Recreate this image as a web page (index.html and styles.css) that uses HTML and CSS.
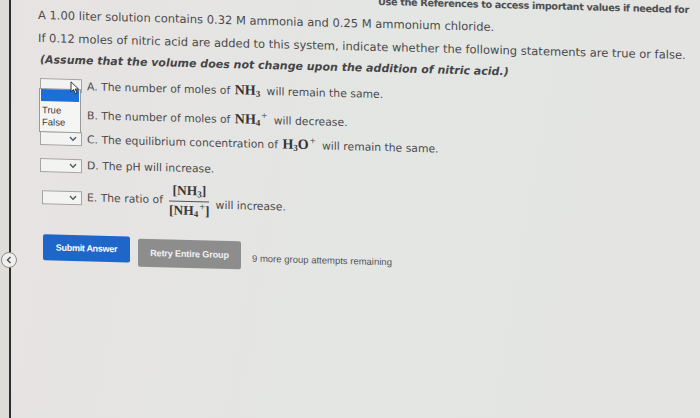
FILE: index.html
```html
<!DOCTYPE html>
<html>
<head>
<meta charset="utf-8">
<link rel="stylesheet" href="styles.css">
</head>
<body>
<div class="screen">
  <div class="sidebar">
    <div class="back-btn">
      <svg width="10" height="10" viewBox="0 0 10 10"><path d="M6.5 2 L3.5 5 L6.5 8" fill="none" stroke="#555" stroke-width="1.5"/></svg>
    </div>
  </div>
  <div class="main">
    <div class="content">
      <div class="refs">Use the References to access important values if needed for</div>
      <p class="line l1">A 1.00 liter solution contains 0.32 M ammonia and 0.25 M ammonium chloride.</p>
      <p class="line">If 0.12 moles of nitric acid are added to this system, indicate whether the following statements are true or false.</p>
      <p class="line note">(Assume that the volume does not change upon the addition of nitric acid.)</p>

      <div class="row row-a">
        <div class="select open">
          <div class="menu">
            <div class="opt sel"></div>
            <div class="opt">True</div>
            <div class="opt">False</div>
          </div>
          <svg class="cursor" width="10" height="14" viewBox="0 0 10 14"><path d="M1 1 L1 11 L3.5 8.6 L5.4 12.8 L7 12 L5.2 8 L8.6 8 Z" fill="#fff" stroke="#222" stroke-width="0.9"/></svg>
        </div>
        <span class="stmt">A. The number of moles of <span class="chem">NH<sub>3</sub></span> will remain the same.</span>
      </div>

      <div class="row row-b">
        <div class="select hidden-sel"></div>
        <span class="stmt">B. The number of moles of <span class="chem">NH<sub>4</sub><sup>+</sup></span> will decrease.</span>
      </div>

      <div class="row row-c">
        <div class="select"><svg class="chev" width="8" height="6" viewBox="0 0 8 6"><path d="M1 1.2 L4 4.4 L7 1.2" fill="none" stroke="#4a5a70" stroke-width="1.4"/></svg></div>
        <span class="stmt">C. The equilibrium concentration of <span class="chem">H<sub>3</sub>O<sup>+</sup></span> will remain the same.</span>
      </div>

      <div class="row row-d">
        <div class="select"><svg class="chev" width="8" height="6" viewBox="0 0 8 6"><path d="M1 1.2 L4 4.4 L7 1.2" fill="none" stroke="#4a5a70" stroke-width="1.4"/></svg></div>
        <span class="stmt">D. The pH will increase.</span>
      </div>

      <div class="row row-e">
        <div class="select sel-e"><svg class="chev" width="8" height="6" viewBox="0 0 8 6"><path d="M1 1.2 L4 4.4 L7 1.2" fill="none" stroke="#4a5a70" stroke-width="1.4"/></svg></div>
        <span class="stmt">E. The ratio of</span>
        <span class="frac">
          <span class="num">[NH<sub>3</sub>]</span>
          <span class="den">[NH<sub>4</sub><sup>+</sup>]</span>
        </span>
        <span class="stmt after">will increase.</span>
      </div>

      <div class="actions">
        <button class="btn submit">Submit Answer</button>
        <button class="btn retry">Retry Entire Group</button>
        <span class="attempts">9 more group attempts remaining</span>
      </div>
    </div>
  </div>
</div>
</body>
</html>
```

FILE: styles.css
```css
html, body {
  margin: 0;
  padding: 0;
  width: 700px;
  height: 418px;
  overflow: hidden;
}
body {
  background: linear-gradient(100deg, #e7e3e2 0%, #e3e6e3 55%, #e4e4e2 100%);
  font-family: "DejaVu Sans", Verdana, sans-serif;
  color: #4b4b4d;
}
.screen {
  display: flex;
  height: 418px;
}
.sidebar {
  position: relative;
  width: 9px;
  flex: none;
  border-right: 2px solid #2e2e2e;
  background: #deddda;
}
.back-btn {
  position: absolute;
  left: 1px;
  top: 252px;
  width: 14px;
  height: 14px;
  border-radius: 50%;
  background: #efefed;
  border: 1px solid #8a8a8a;
  display: flex;
  align-items: center;
  justify-content: center;
}
.main {
  flex: 1;
  padding-left: 26px;
}
.content {
  transform: skewY(1.5deg);
  transform-origin: 0 0;
}
.refs {
  margin: -14px 0 0 341px;
  height: 14px;
  line-height: 14px;
  font-size: 9.8px;
  letter-spacing: -0.4px;
  font-weight: bold;
  color: #505052;
  white-space: nowrap;
}
.line {
  margin: 0 0 0 1px;
  font-size: 11.5px;
  line-height: 22.5px;
  white-space: nowrap;
}
.l1 { margin-top: 4px; }
.note {
  font-size: 11px;
  font-weight: bold;
  font-style: italic;
  margin-left: 3px;
  color: #454547;
}
.row {
  display: flex;
  align-items: center;
  height: 20px;
  font-size: 10.8px;
  white-space: nowrap;
}
.row-a { margin-top: 3px; }
.row-b { margin-top: 9px; }
.row-c { margin-top: 4px; }
.row-d { margin-top: 7px; }
.row-e { margin-top: 2px; height: 40px; }
.select {
  position: relative;
  flex: none;
  width: 40px;
  height: 12px;
  margin-left: 3px;
  margin-right: 5px;
  border: 1px solid #a3a3a3;
  background: #f3f3f2;
}
.sel-e { margin-left: 5px; width: 38px; }
.hidden-sel { border-color: transparent; background: transparent; }
.chev {
  position: absolute;
  right: 4px;
  top: 3px;
}
.menu {
  position: absolute;
  left: -2px;
  top: 9px;
  width: 40px;
  border: 1px solid #9a9a9a;
  background: #f5f5f4;
  padding: 0 0 3px;
  z-index: 2;
}
.opt {
  height: 12px;
  line-height: 12px;
  font-family: "Liberation Sans", Arial, sans-serif;
  font-size: 9.5px;
  color: #3a3a3c;
  padding-left: 2px;
}
.opt.sel {
  height: 12px;
  margin: 0 1px 3px;
  background: #1d6fd8;
}
.cursor {
  position: absolute;
  right: 1px;
  top: 1px;
  z-index: 3;
}
.chem {
  font-family: "Liberation Serif", "Times New Roman", serif;
  font-weight: bold;
  font-size: 14px;
  color: #333;
  margin: 0 3px 0 1px;
}
.chem sub, .frac sub {
  font-size: 9px;
  line-height: 0;
  vertical-align: -2px;
}
.chem sup, .frac sup {
  font-size: 10.5px;
  line-height: 0;
  vertical-align: 5px;
  font-weight: normal;
  margin-left: 1px;
}
.frac {
  display: inline-flex;
  flex-direction: column;
  align-items: center;
  margin: 0 6px 0 6px;
  font-family: "Liberation Serif", "Times New Roman", serif;
  font-weight: bold;
  font-size: 13.5px;
  color: #3a3a3a;
}
.num {
  padding: 0 3px 3px;
  border-bottom: 1px solid #555;
  line-height: 15px;
}
.den {
  line-height: 15px;
  padding-top: 1px;
}
.after {
  margin-top: 7px;
}
.actions {
  display: flex;
  align-items: flex-start;
  margin-top: 17.5px;
  margin-left: 6px;
}
.btn {
  font-family: "Liberation Sans", Arial, sans-serif;
  font-weight: bold;
  font-size: 9px;
  color: #fff;
  border: none;
  border-radius: 2px;
  padding: 0;
  letter-spacing: -0.3px;
}
.submit {
  width: 87px;
  height: 26px;
  background: #1f66c9;
}
.retry {
  width: 103px;
  height: 28px;
  margin-left: 8px;
  margin-top: 2px;
  background: #8d8d8d;
  color: #f2f2f2;
  letter-spacing: -0.1px;
}
.attempts {
  font-family: "Liberation Sans", Arial, sans-serif;
  font-size: 9.5px;
  color: #555557;
  margin-left: 11px;
  margin-top: 13px;
  white-space: nowrap;
}
```
